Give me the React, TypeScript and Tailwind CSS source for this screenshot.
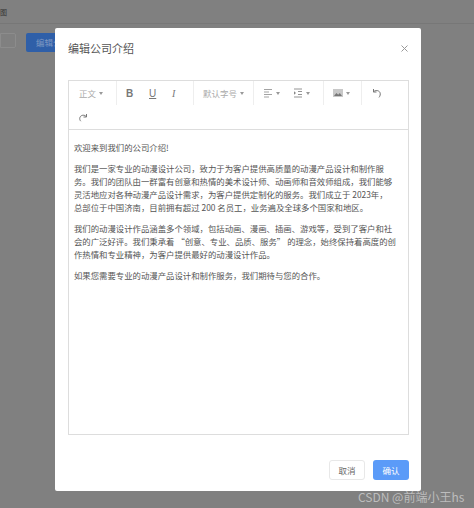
const font = { fontFamily: '"Noto Sans CJK SC", "Noto Sans", sans-serif' };

function Caret() {
  return <span className="ml-[3px] inline-block h-0 w-0 border-x-[2px] border-t-[3px] border-x-transparent border-t-[#999]" />;
}

function Divider() {
  return <span className="h-[24px] w-px bg-[#eeeeee]" />;
}

function Toolbar() {
  return (
    <div className="h-[49px] border-b border-[#dddddd] text-[8.5px] text-[#aaaaaa]">
      <div className="flex h-[24px] items-center">
        <div className="flex w-[47px] items-center pl-[10px]">
          正文<Caret />
        </div>
        <Divider />
        <div className="flex w-[76px] items-center pl-[9px] text-[#777]">
          <span className="w-[23px] text-[10px] font-bold" style={{ fontFamily: '"Liberation Sans", sans-serif' }}>B</span>
          <span className="w-[23px] text-[10px] underline" style={{ fontFamily: '"Liberation Sans", sans-serif' }}>U</span>
          <span className="text-[10px] italic" style={{ fontFamily: '"Liberation Serif", serif' }}>I</span>
        </div>
        <Divider />
        <div className="flex w-[59px] items-center pl-[9px]">
          默认字号<Caret />
        </div>
        <Divider />
        <div className="flex w-[69px] items-center pl-[9px]">
          <svg width="10" height="10" viewBox="0 0 10 10" fill="none" stroke="#999" strokeWidth="0.9">
            <path d="M1 1.5h8M1 4h5M1 6.5h8M1 9h5" />
          </svg>
          <Caret />
          <span className="ml-[13px] flex items-center">
            <svg width="10" height="10" viewBox="0 0 10 10" fill="none" stroke="#888" strokeWidth="0.9">
              <path d="M1 1h8M1 9h8M5 3.5h4M5 6.5h4" />
              <path d="M1 3.3L3 5 1 6.7z" fill="#888" stroke="none" />
            </svg>
            <Caret />
          </span>
        </div>
        <Divider />
        <div className="flex w-[37px] items-center pl-[9px]">
          <svg width="10" height="10" viewBox="0 0 10 10">
            <path d="M0 1h10v8H0z" fill="#c8c8c8" />
            <path d="M1 8l2.4-3 1.8 1.8L6.8 5 9 8z" fill="#777" />
          </svg>
          <Caret />
        </div>
        <Divider />
        <div className="flex items-center pl-[9px]">
          <svg width="11" height="11" viewBox="0 0 11 11" fill="none" stroke="#777" strokeWidth="1">
            <path d="M2.5 1v3h3M2.6 3.8C4 2 7.8 2 9 4.6c.6 1.6.2 3.4-1 4.8" />
          </svg>
        </div>
      </div>
      <div className="flex h-[24px] items-center pl-[9px]">
        <svg width="11" height="11" viewBox="0 0 11 11" fill="none" stroke="#777" strokeWidth="1">
          <path d="M8.5 2v3h-3M8.4 4.8C7 2.6 3.2 2.6 2 5.2c-.6 1.6-.2 3 .8 4" />
        </svg>
      </div>
    </div>
  );
}

export default function App() {
  return (
    <div className="relative h-[508px] w-[474px] overflow-hidden bg-[#808080]" style={font}>
      <div className="h-[24px] border-b border-[#777777] text-[7px] leading-[24px] text-[#333]">图</div>
      <div className="flex items-start pt-[9px]">
        <div className="h-[15px] w-[16px] rounded-r-[2px] border border-[#8c8c8c]" />
        <div className="ml-[10px] flex h-[19px] w-[40px] items-center rounded-[2px] bg-[#2f5fa8] pl-[10px] text-[8.5px] text-[#7f98c2]">
          编辑公
        </div>
      </div>

      <div className="absolute left-[55px] top-[28px] flex h-[463px] w-[366px] flex-col rounded-[2px] bg-white">
        <div className="flex h-[52px] items-start justify-between pl-[13px] pr-[11px] pt-[10px]">
          <h2 className="text-[11px] leading-[20px] text-[#555555]">编辑公司介绍</h2>
          <svg className="mt-[5px]" width="11" height="11" viewBox="0 0 11 11" stroke="#999" strokeWidth="1" fill="none">
            <path d="M2.5 2.5l6 6M8.5 2.5l-6 6" />
          </svg>
        </div>

        <div className="mx-[13px] flex h-[355px] w-[341px] flex-col border border-[#dddddd]">
          <Toolbar />
          <div className="whitespace-nowrap pl-[5px] pt-[11px] text-[8.4px] leading-[13px] text-[#555555]">
            <p className="mb-[8px]">欢迎来到我们的公司介绍!</p>
            <p className="mb-[8px]">
              我们是一家专业的动漫设计公司，致力于为客户提供高质量的动漫产品设计和制作服<br />
              务。我们的团队由一群富有创意和热情的美术设计师、动画师和音效师组成，我们能够<br />
              灵活地应对各种动漫产品设计需求，为客户提供定制化的服务。我们成立于 2023年，<br />
              总部位于中国济南，目前拥有超过 200 名员工，业务遍及全球多个国家和地区。
            </p>
            <p className="mb-[8px]">
              我们的动漫设计作品涵盖多个领域，包括动画、漫画、插画、游戏等，受到了客户和社<br />
              会的广泛好评。我们秉承着 “创意、专业、品质、服务” 的理念，始终保持着高度的创<br />
              作热情和专业精神，为客户提供最好的动漫设计作品。
            </p>
            <p>如果您需要专业的动漫产品设计和制作服务，我们期待与您的合作。</p>
          </div>
        </div>

        <div className="flex justify-end gap-[8px] pr-[12px] pt-[25px]">
          <button className="h-[20px] w-[36px] rounded-[3px] border border-[#e8e8e8] bg-white text-[8.5px] text-[#666666]">取消</button>
          <button className="h-[20px] w-[36px] rounded-[3px] bg-[#5b9bf8] text-[8.5px] text-white">确认</button>
        </div>
      </div>

      <div className="absolute left-[358px] top-[489px] text-[12px] leading-[15px] text-[#bdbdbd]">CSDN @前端小王hs</div>
    </div>
  );
}
